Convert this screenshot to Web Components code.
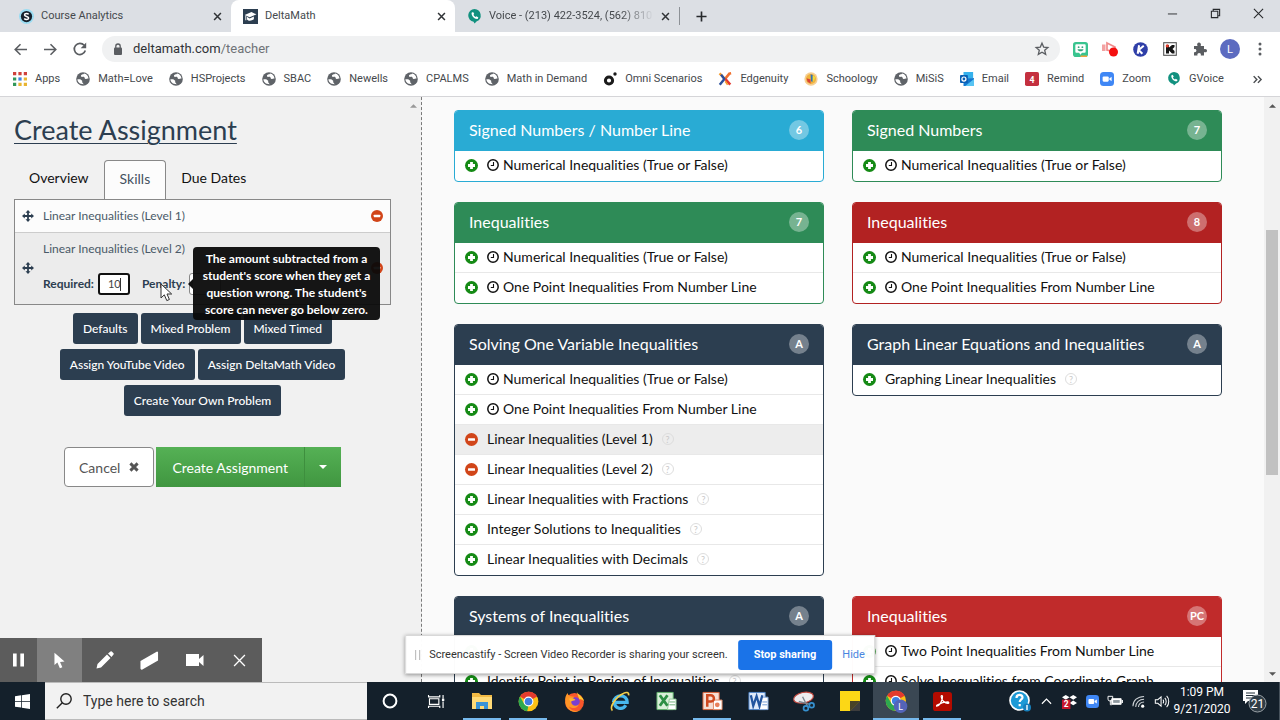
<!DOCTYPE html>
<html lang="en">
<head>
<meta charset="utf-8">
<meta name="viewport" content="width=device-width, initial-scale=1">
<title>DeltaMath</title>
<style>
  html, body { margin: 0; height: 100%; }
  body { overflow: hidden; font-family: Roboto, "Noto Sans", sans-serif; font-size: 11px; color: #3c4043; font-variant-ligatures: none; }
</style>
</head>
<body>
<desktop-screen>
  <tab-strip slot="chrome">
    <browser-tab icon="schoology-s" label="Course Analytics"></browser-tab>
    <browser-tab icon="deltamath" label="DeltaMath" selected></browser-tab>
    <browser-tab icon="voice" label="Voice - (213) 422-3524, (562) 810" fade></browser-tab>
  </tab-strip>
  <address-bar slot="chrome"></address-bar>
  <bookmarks-bar slot="chrome">
    <book-mark icon="apps">Apps</book-mark>
    <book-mark icon="globe">Math=Love</book-mark>
    <book-mark icon="globe">HSProjects</book-mark>
    <book-mark icon="globe">SBAC</book-mark>
    <book-mark icon="globe">Newells</book-mark>
    <book-mark icon="globe">CPALMS</book-mark>
    <book-mark icon="globe">Math in Demand</book-mark>
    <book-mark icon="omni">Omni Scenarios</book-mark>
    <book-mark icon="edgenuity">Edgenuity</book-mark>
    <book-mark icon="schoology">Schoology</book-mark>
    <book-mark icon="globe">MiSiS</book-mark>
    <book-mark icon="outlook">Email</book-mark>
    <book-mark icon="remind">Remind</book-mark>
    <book-mark icon="zoom">Zoom</book-mark>
    <book-mark icon="voice">GVoice</book-mark>
  </bookmarks-bar>

  <assignment-panel slot="page">
    <assigned-skills></assigned-skills>
  </assignment-panel>
  <skill-board slot="page">
    <skill-card heading="Signed Numbers / Number Line" badge="6" tone="#29abd4">
      <skill-row timed>Numerical Inequalities (True or False)</skill-row>
    </skill-card>
    <skill-card heading="Signed Numbers" badge="7" tone="#2e8b57">
      <skill-row timed>Numerical Inequalities (True or False)</skill-row>
    </skill-card>
    <skill-card heading="Inequalities" badge="7" tone="#2e8b57">
      <skill-row timed>Numerical Inequalities (True or False)</skill-row>
      <skill-row timed>One Point Inequalities From Number Line</skill-row>
    </skill-card>
    <skill-card heading="Inequalities" badge="8" tone="#b22222">
      <skill-row timed>Numerical Inequalities (True or False)</skill-row>
      <skill-row timed>One Point Inequalities From Number Line</skill-row>
    </skill-card>
    <skill-card heading="Solving One Variable Inequalities" badge="A" tone="#2c3e50">
      <skill-row timed>Numerical Inequalities (True or False)</skill-row>
      <skill-row timed>One Point Inequalities From Number Line</skill-row>
      <skill-row chosen hovered help>Linear Inequalities (Level 1)</skill-row>
      <skill-row chosen help>Linear Inequalities (Level 2)</skill-row>
      <skill-row help>Linear Inequalities with Fractions</skill-row>
      <skill-row help>Integer Solutions to Inequalities</skill-row>
      <skill-row help>Linear Inequalities with Decimals</skill-row>
    </skill-card>
    <skill-card heading="Graph Linear Equations and Inequalities" badge="A" tone="#2c3e50">
      <skill-row help>Graphing Linear Inequalities</skill-row>
    </skill-card>
    <skill-card heading="Systems of Inequalities" badge="A" tone="#2c3e50">
      <skill-row></skill-row>
      <skill-row help>Identify Point in Region of Inequalities</skill-row>
    </skill-card>
    <skill-card heading="Inequalities" badge="PC" tone="#c02b2b">
      <skill-row timed>Two Point Inequalities From Number Line</skill-row>
      <skill-row timed>Solve Inequalities from Coordinate Graph</skill-row>
    </skill-card>
  </skill-board>

  <recorder-tools slot="overlay"></recorder-tools>
  <share-notice slot="overlay"></share-notice>
  <task-bar slot="taskbar"></task-bar>
</desktop-screen>

<script>
const voiceSvg = '<path d="M8 0a7.3 7.3 0 0 0-1 14.5L8 16.5l2.600-2.500A7.300 7.300 0 0 0 8 0z" fill="#12917f"/><path d="M4.700 4.300l1.700-.9 1.300 2.200-1 1c.5 1.200 1.300 2 2.500 2.600l1-1 2.200 1.400-.9 1.700c-3.500.5-7.200-3.400-6.800-7z" fill="#fff"/>';
const zoomSvg = '<rect width="16" height="16" rx="4" fill="#3f87f5"/><rect x="3" y="5" width="7" height="6" rx="1.300" fill="#fff"/><path d="M10.600 7.400L13.300 5.400v5.200l-2.700-2z" fill="#fff"/>';
const chromeSvg = '<circle cx="16" cy="16" r="15" fill="#fbc116"/><path d="M16 16L3 8.500A15 15 0 0 1 29 8.500z" fill="#e33b2e"/><path d="M16 1a15 15 0 0 1 13 7.500H16z" fill="#e33b2e"/><path d="M3 8.500l6.500 11.300L16 22.500l-2 8.400A15 15 0 0 1 3 8.500z" fill="#2da94f"/><circle cx="16" cy="16" r="7.500" fill="#fff"/><circle cx="16" cy="16" r="5.800" fill="#3e7de0"/>';
/* name: [viewBox, markup]; strokes and fills use currentColor where the icon is monochrome */
const ICONS = {
  'close': ['0 0 10 10', '<path d="M1.200 1.200l7.600 7.600M8.800 1.200L1.200 8.800" stroke="currentColor" stroke-width="1.700"/>'],
  'close-thin': ['0 0 12 12', '<path d="M1 1l10 10M11 1L1 11" stroke="currentColor" stroke-width="1.200"/>'],
  'plus': ['0 0 12 12', '<path d="M6 .5v11M.5 6h11" stroke="currentColor" stroke-width="1.800"/>'],
  'minimize': ['0 0 12 12', '<path d="M1 6.500h10" stroke="currentColor"/>'],
  'restore': ['0 0 12 12', '<path d="M1.500 3.500h7v7h-7zM3.500 3.500v-2h7v7h-2" fill="none" stroke="currentColor" stroke-width="1.200"/>'],
  'schoology-s': ['0 0 16 16', '<circle cx="8" cy="8" r="8" fill="#9adcf2"/><circle cx="8" cy="8" r="6" fill="#15202b"/><path d="M10.300 5.800C9.500 4.600 5.900 4.300 5.900 6.300c0 2 4.400 1.200 4.400 3.300 0 2-3.600 2-4.700.6" fill="none" stroke="#fff" stroke-width="1.600"/>'],
  'deltamath': ['0 0 16 16', '<rect width="16" height="16" fill="#2c3e50"/><path d="M1.800 6.300L9 3.200l5.300 2.500-7.200 3.200z" fill="#fff"/><path d="M4.300 8.300v2.900c1.400 1.900 5 1.700 7.300-.2V7.900L7.100 10z" fill="#fff"/><path d="M3 7v5" stroke="#fff"/>'],
  'voice': ['0 0 16 17', voiceSvg],
  'back': ['0 0 14 14', '<path d="M14 7H1.800M7 1.300L1.300 7 7 12.700" fill="none" stroke="currentColor" stroke-width="1.700"/>'],
  'forward': ['0 0 14 14', '<path d="M0 7h12.200M7 1.300L12.700 7 7 12.700" fill="none" stroke="currentColor" stroke-width="1.700"/>'],
  'reload': ['0 0 14 14', '<path d="M12.300 8.500A5.600 5.600 0 1 1 11.200 3.300" fill="none" stroke="currentColor" stroke-width="1.700"/><path d="M13.200.6v5.600H7.700z" fill="currentColor"/>'],
  'lock': ['0 0 10 12', '<rect x="1" y="4.500" width="8" height="7.500" rx="1" fill="currentColor"/><path d="M2.800 5V3.200a2.200 2.200 0 0 1 4.400 0V5" fill="none" stroke="currentColor" stroke-width="1.300"/>'],
  'star': ['0 0 14 14', '<path d="M7 1.200l1.700 3.900 4.200.4-3.200 2.800 1 4.100L7 10.300l-3.700 2.100 1-4.100L1.100 5.500l4.200-.4z" fill="none" stroke="currentColor" stroke-width="1.300"/>'],
  'bitmoji': ['0 0 16 16', '<rect width="16" height="16" rx="3" fill="#39c48f"/><path d="M3.500 2.500h9a1 1 0 0 1 1 1v7a1 1 0 0 1-1 1h-3L8 13.500 6.500 11.500h-3a1 1 0 0 1-1-1v-7a1 1 0 0 1 1-1z" fill="#fff"/><circle cx="6" cy="5.500" r="1" fill="#39a47f"/><circle cx="10" cy="5.500" r="1" fill="#39a47f"/><path d="M4.800 7.600h6.400c-.4 3-6 3-6.400 0z" fill="#39a47f"/><path d="M8 15.200h7" stroke="#f3a33c" stroke-width="1.600"/>'],
  'castify': ['0 0 16 16', '<rect x="0" y="3.500" width="3.500" height="6.500" fill="#f3a2a2"/><path d="M5 2l8 4v5L5 9z" fill="#fff" stroke="#f08c8c" stroke-width="1.700"/><circle cx="11.500" cy="11" r="4.500" fill="#f40f0f"/>'],
  'kami': ['0 0 16 16', '<circle cx="8" cy="8" r="7.800" fill="#2f3fa8"/><path d="M6.500 3.500L5 12.500M11.500 4L6 8.500l4 4" fill="none" stroke="#fff" stroke-width="2.200"/>'],
  'ksite': ['0 0 14 14', '<rect x=".7" y=".7" width="12.600" height="12.600" fill="#fff" stroke="#555" stroke-width="1.100"/><path d="M3 3h3v2.500L9 3h2.500v2L9.500 7l2 2v2.500H9L6 8.500v3H3z" fill="#151515"/><circle cx="4.300" cy="3.900" r="1.600" fill="#e23b2a"/>'],
  'puzzle': ['0 0 14 14', '<path d="M1 4h3.500C3.500 1.800 4.700.6 6 .6S8.500 1.800 7.700 4H11v3.200c2-.7 3 .4 3 1.500s-1 2.100-3 1.400V13.500H7.800c.5-1.700-.5-2.500-1.700-2.500s-2.100 1-1.600 2.500H1v-3.300c1.500.4 2.400-.5 2.400-1.600S2.500 6.700 1 7.200z" fill="currentColor"/>'],
  'dots': ['0 0 4 14', '<circle cx="2" cy="2" r="1.500" fill="currentColor"/><circle cx="2" cy="7" r="1.500" fill="currentColor"/><circle cx="2" cy="12" r="1.500" fill="currentColor"/>'],
  'apps': ['0 0 13 13', '<path d="M0 0h3v3H0zM5 0h3v3H5zM10 0h3v3h-3z" fill="#d0413b"/><path d="M0 5h3v3H0zM0 10h3v3H0z" fill="#32975a"/><path d="M5 5h3v3H5z" fill="#3f83e0"/><path d="M10 5h3v3h-3zM5 10h3v3H5zM10 10h3v3h-3z" fill="#e9b531"/>'],
  'globe': ['0 0 14 14', '<circle cx="7" cy="7" r="6.800" fill="#5f6368"/><path d="M1.400 7.300h2.800l2 1.500v1.400l1.500 2C4 12.300 1.500 10.300 1.400 7.300zM8 1.600c-.5 1.400-3.300.7-3 2.600.4 1.600 2.500 0 3.300 1 .7.900.2 1.500 1.400 1.900 1.100.2 1.800-.9 2.800-.3C12.400 4 10.600 1.900 8 1.600z" fill="#fff"/>'],
  'omni': ['0 0 14 14', '<circle cx="6" cy="8.500" r="3.600" fill="none" stroke="#1b1b1b" stroke-width="3"/><circle cx="12" cy="2" r="1.700" fill="#1b1b1b"/>'],
  'edgenuity': ['0 0 16 16', '<path d="M8 8L13 1.800M8 8L13 1.800l2-.4" stroke="#f1702e" stroke-width="3" fill="none"/><path d="M1.800 1.500L8 8" stroke="#f49a2b" stroke-width="2.800"/><path d="M3.500 3L7.300 8 2 14.500" fill="none" stroke="#2a4f9c" stroke-width="2.800"/><path d="M8.500 8L14 14.500" stroke="#e3372e" stroke-width="3"/><path d="M8.300 10.500L11 14.500" stroke="#f49a2b" stroke-width="1.800"/>'],
  'schoology': ['0 0 16 16', '<circle cx="8" cy="8" r="7.600" fill="#f6cf92"/><circle cx="8" cy="8" r="5.800" fill="#f1b33e"/><path d="M7.500 2.500l2.500 1v8l-2-1z" fill="#2f72b8"/><path d="M3 7l4.500 1.500V13L4 11z" fill="#d94436"/><path d="M10 4l3 2-3 6z" fill="#edde3a"/>'],
  'outlook': ['0 0 16 16', '<path d="M4 0h11v7H4z" fill="#35b1ec"/><path d="M4 7h12v9H4z" fill="#1177cf"/><path d="M16 8v8H6z" fill="#58c4f3"/><rect x="0" y="3.500" width="9" height="9" rx="1" fill="#0a5fb4"/><circle cx="4.500" cy="8" r="2.300" fill="none" stroke="#fff" stroke-width="1.400"/>'],
  'remind': ['0 0 16 16', '<rect width="16" height="16" rx="2" fill="#c4303f"/><text x="8" y="12" font-size="10" font-weight="700" text-anchor="middle" fill="#fff">4</text>'],
  'zoom': ['0 0 16 16', zoomSvg],
  'chevrons': ['0 0 8 8', '<path d="M.6 1L3.400 4 .6 7M4.400 1L7.200 4 4.400 7" fill="none" stroke="currentColor" stroke-width="1.300"/>'],
  'move': ['0 0 12 12', '<path d="M6 0l2.500 2.800H6.900v2.300h2.300V3.500L12 6 9.200 8.500V6.900H6.900v2.300h1.600L6 12 3.500 9.200h1.600V6.900H2.800v1.600L0 6l2.800-2.500v1.600h2.300V2.800H3.500z" fill="currentColor"/>'],
  'minus-circle': ['0 0 13 13', '<circle cx="6.500" cy="6.500" r="6.500" fill="#d14519"/><rect x="3" y="5.200" width="7" height="2.600" rx=".5" fill="#fff"/>'],
  'plus-circle': ['0 0 13 13', '<circle cx="6.500" cy="6.500" r="6.500" fill="#158a15"/><path d="M5.100 3h2.800v2.100H10v2.800H7.900V10H5.100V7.900H3V5.100h2.100z" fill="#fff"/>'],
  'clock': ['0 0 12 12', '<circle cx="6" cy="6" r="5.200" fill="none" stroke="currentColor" stroke-width="1.500"/><path d="M6.500 3v3.500H3.800" fill="none" stroke="currentColor" stroke-width="1.100"/>'],
  'cross-bold': ['0 0 10 10', '<path d="M1.400 1.400l7.200 7.200M8.600 1.400L1.400 8.600" stroke="currentColor" stroke-width="2.900"/>'],
  'caret': ['0 0 8 4', '<path d="M0 0h8L4 4z" fill="currentColor"/>'],
  'caret-up': ['0 0 8 4', '<path d="M0 4h8L4 0z" fill="currentColor"/>'],
  'pause': ['0 0 12 14', '<path d="M0 0h4v14H0zM8 0h4v14H8z" fill="#fff"/>'],
  'pointer': ['0 0 12 18', '<path d="M.5.500v13.500l3.200-2.800L6.400 17.500l2.700-1.100-2.500-5.900 4.900-.3z" fill="#fff"/>'],
  'mouse': ['0 0 13 19', '<path d="M1 1v14l3.300-3.200 2.500 5.800 2.600-1.100L7 11h4.700z" fill="#fff" stroke="#333" stroke-width="1"/>'],
  'pencil': ['0 0 18 18', '<path d="M.5 17.500l1-4.500L11 3.500l3.500 3.500L5 16.500zM12 2.500L14.500.4a1 1 0 0 1 1.300.1l1.700 1.700a1 1 0 0 1 0 1.400L15.500 6z" fill="#fff"/>'],
  'eraser': ['0 0 20 20', '<path d="M.5 10.500L17.500.8a1 1 0 0 1 1.500.9V10L2.500 19.500a1.300 1.300 0 0 1-2-1z" fill="#fff"/>'],
  'camera': ['0 0 18 14', '<rect y="1" width="13" height="12" fill="#fff"/><path d="M13 6l4.500-4v11L13 9z" fill="#fff"/>'],
  'windows': ['0 0 16 16', '<path d="M0 2.300L6.500 1.400v6.100H0zM7.300 1.300L16 0v7.500H7.300zM0 8.300h6.500v6.200L0 13.600zM7.300 8.300H16V16l-8.700-1.300z" fill="#fff"/>'],
  'search': ['0 0 16 16', '<circle cx="10" cy="6" r="5.200" fill="none" stroke="currentColor" stroke-width="1.400"/><path d="M6.300 9.700L.8 15.300" stroke="currentColor" stroke-width="1.400"/>'],
  'cortana': ['0 0 16 16', '<circle cx="8" cy="8" r="6.400" fill="none" stroke="#fff" stroke-width="2"/>'],
  'taskview': ['0 0 18 16', '<path d="M1.500 5h10v6h-10zM.5 1v2h12V1M.5 15v-2h12v2M16 1v4M16 8v7" fill="none" stroke="#fff" stroke-width="1.200"/><rect x="14.800" y="5" width="2.500" height="2.500" fill="#fff"/>'],
  'explorer': ['0 0 20 18', '<path d="M0 1h7l2 2h11v14H0z" fill="#f2ba45"/><path d="M0 5h20v12H0z" fill="#ffda77"/><path d="M4 17V10h12v7h-4v-3H8v3z" fill="#3a93d6"/>'],
  'chrome': ['0 0 32 32', chromeSvg],
  'firefox': ['0 0 22 22', '<circle cx="11" cy="12" r="9.800" fill="#f9562b"/><path d="M13 0c1 4 7 5 8 11-2-2-3-3-5-2z" fill="#ffca2e"/><path d="M1.300 10C.8 6 3 3 4 2c0 2 1 2.500 3 3.500L11 6C8 9 10 15 15 12c2 5-6 8-10 4 2 5 9 7 14 2-6 8-18 3-17.700-8z" fill="#ff9526"/><circle cx="12" cy="11" r="4.500" fill="#7a3fd0"/><path d="M5 8c3-1 6-.5 7 1.500-2 1-4 .5-5 2z" fill="#ffb52c"/>'],
  'ie': ['0 0 22 22', '<path d="M16.500 15a6.300 6.300 0 0 1-11.800-3.200H18c.3-9-13.500-9-14.400 0" fill="none" stroke="#48b8ee" stroke-width="3.400"/><path d="M2.500 20.500C-1 17 6 6 14 2.500c3-1.500 6-1.500 5.500 2" fill="none" stroke="#f5cf4a" stroke-width="1.700"/>'],
  'excel': ['0 0 22 20', '<path d="M1 1h17v18H1z" fill="#d9efd9" stroke="#62b36d"/><path d="M14 8h7v11h-9z" fill="#fff" stroke="#90c695"/><path d="M4 4l8 11M12 4L4 15" stroke="#2d8f45" stroke-width="3"/><path d="M14 11h6M14 14h6" stroke="#6aae73"/>'],
  'ppt': ['0 0 22 20', '<path d="M1 1h17v18H1z" fill="#f6dfd5" stroke="#d9633b"/><path d="M12 9h9v10h-9z" fill="#fff" stroke="#e28a66"/><path d="M5.500 16V4h3.700a3 3 0 0 1 0 6.600H6" fill="none" stroke="#cf4920" stroke-width="2.600"/><circle cx="16" cy="14" r="2.500" fill="#e8805b"/>'],
  'word': ['0 0 22 20', '<path d="M1 1h17v18H1z" fill="#dfeafa" stroke="#4f86cc"/><path d="M14 6h7v13h-9z" fill="#fff" stroke="#81a7da"/><path d="M3 4l2.500 11L9 5l3 10L15 4" fill="none" stroke="#22559f" stroke-width="2.400"/><path d="M15 11h5M15 14h5" stroke="#6a96d2"/>'],
  'snip': ['0 0 24 22', '<ellipse cx="11" cy="7" rx="10.500" ry="5.500" fill="#ededf0" stroke="#c44b42" stroke-width="1.200" transform="rotate(-12 11 7)"/><path d="M6 11l12 3M10 6l5 10" stroke="#7d8790" stroke-width="1.400"/><circle cx="13.500" cy="18" r="2.500" fill="none" stroke="#3590cf" stroke-width="1.800"/><circle cx="19.500" cy="15" r="2.500" fill="none" stroke="#3590cf" stroke-width="1.800"/>'],
  'sticky': ['0 0 20 20', '<path d="M0 0h20v10L10 20H0z" fill="#fcd716"/><path d="M20 10v10H10z" fill="#3d3d3d"/><path d="M10 20V10h10z" fill="#494327"/>'],
  'chrome-user': ['0 0 34 34', chromeSvg + '<circle cx="23" cy="24" r="10" fill="#5464b8"/><text x="23" y="29" font-size="13" text-anchor="middle" fill="#fff">L</text>'],
  'acrobat': ['0 0 20 20', '<rect width="20" height="20" rx="3" fill="#b30b00"/><path d="M4 15c2 0 6.500-5.500 6-10.500-.2-1.200-1.500-1-1.400.4C9 9 13 12.500 16 12c1-.3.8-1.400-.6-1.500-3 0-8 1.600-11 3.300-1 .6-.6 1.200-.4 1.200z" fill="none" stroke="#fff" stroke-width="1.300"/>'],
  'help-tray': ['0 0 22 22', '<circle cx="10.500" cy="10.500" r="9.500" fill="#1d9ad6" stroke="#fff" stroke-width="1.700"/><path d="M7.500 8c0-4 6-4 6-.6 0 2-2.800 2.100-2.800 4.600M10.700 14v2.300" fill="none" stroke="#fff" stroke-width="2.200"/><circle cx="18" cy="17.500" r="4" fill="#1780bd"/><path d="M18 15v5" stroke="#fff" stroke-width="1.400"/>'],
  'up': ['0 0 12 8', '<path d="M1 7l5-5 5 5" fill="none" stroke="#fff" stroke-width="1.300"/>'],
  'dropbox': ['0 0 16 16', '<path d="M4 1l4 2.500L4 6 0 3.500zM12 1l4 2.500L12 6 8 3.500zM12 7l4 2.500-4 2.500-4-2.500z" fill="#fff"/><rect y="6" width="9" height="10" fill="#c5142c"/><text x="4.500" y="14" font-size="9" font-weight="700" text-anchor="middle" fill="#fff">2</text>'],
  'battery': ['0 0 16 12', '<path d="M4 3.500h10v6H4z" fill="#fff" stroke="#fff"/><path d="M5.500 5h7v3h-7z" fill="#8e989e"/><path d="M15.200 5v3" stroke="#fff" stroke-width="1.400"/><path d="M0 1h5v3a2 2 0 0 1-2 2H2a2 2 0 0 1-2-2zM2.500 5v5H4" fill="none" stroke="#fff"/>'],
  'wifi': ['0 0 14 14', '<path d="M1 12C1 6 6 1.500 13 1.500M4 13c0-5 4-8.500 9-8.500M7 13c0-3 2.500-5.500 6-5.500" fill="none" stroke="#cfd4d8" stroke-width="1.100"/><circle cx="11.500" cy="12" r="1.700" fill="#fff"/>'],
  'volume': ['0 0 16 14', '<path d="M.8 5h2.700L7 2v10L3.500 9H.8z" fill="none" stroke="#fff" stroke-width="1.100"/><path d="M9 5c1 1 1 3 0 4M11 3c2 2 2 6 0 8M13 1c3 3 3 9 0 12" fill="none" stroke="#fff" stroke-width="1.100"/>'],
  'notes': ['0 0 26 26', '<path d="M1 2h15v11H6l-3 3v-3H1z" fill="#fff"/><path d="M4 5h9M4 7.500h9M4 10h6" stroke="#22303b"/><circle cx="15.500" cy="15.500" r="8.500" fill="#303d47" stroke="#9aa1a6"/><text x="15.500" y="20" font-size="12" text-anchor="middle" fill="#fff">21</text>']
};

class Component extends HTMLElement {
  connectedCallback() {
    if (this.shadowRoot) return;
    const t = document.createElement('template');
    t.innerHTML = `<style>
      *, *::before, *::after { box-sizing: border-box; }
      :host { display: block; box-sizing: border-box; }
      button, input { font: inherit; color: inherit; margin: 0; }
      button { display: flex; align-items: center; justify-content: center; padding: 0; border: 0; background: none; }
      a { color: inherit; text-decoration: none; }
      ${this.css()}</style>${this.html()}`;
    this.attachShadow({ mode: 'open' }).append(t.content.cloneNode(true));
  }
  css() { return ''; }
  html() { return '<slot></slot>'; }
}
const icon = (name, w, h = w) => `<ui-icon name="${name}" w="${w}" h="${h}"></ui-icon>`;
const iconButton = (label, name, w, h = w, cls = '') => `<button class="${cls}" aria-label="${label}">${icon(name, w, h)}</button>`;

class UiIcon extends Component {
  css() { return `:host { display: block; flex: none; width: ${this.getAttribute('w')}px; height: ${this.getAttribute('h')}px; } svg { display: block; width: 100%; height: 100%; overflow: visible; }`; }
  html() {
    const [box, art] = ICONS[this.getAttribute('name')];
    return `<svg viewBox="${box}" aria-hidden="true">${art}</svg>`;
  }
}

class DesktopScreen extends Component {
  css() { return `
    :host { display: flex; flex-direction: column; height: 100vh; position: relative; }
    main { flex: 1; min-height: 0; display: flex; overflow: hidden; border-top: 1px solid #d5d5d8; background: #f1f1f1; }
    .overlay { position: absolute; left: 0; right: 0; bottom: 38px; z-index: 2; }`; }
  html() { return `<slot name="chrome"></slot><main><slot name="page"></slot></main><div class="overlay"><slot name="overlay"></slot></div><slot name="taskbar"></slot>`; }
}

class TabStrip extends Component {
  css() { return `
    :host { flex: none; display: flex; align-items: stretch; height: 32px; padding-left: 7px; background: #dcdfe4; color: #27292c; }
    .new { width: 43px; border-left: 1px solid #8d9196; height: 18px; align-self: center; }
    .controls { margin-left: auto; display: flex; height: 27px; }
    .controls button { width: 43px; }`; }
  html() { return `<slot></slot>${iconButton('New tab', 'plus', 11, 11, 'new')}
    <div class="controls">${iconButton('Minimize', 'minimize', 11)}${iconButton('Restore', 'restore', 11)}${iconButton('Close', 'close-thin', 11)}</div>`; }
}

class BrowserTab extends Component {
  css() { return `
    :host { display: flex; align-items: center; gap: 7px; width: 224px; padding: 0 9px 0 12px; color: #45494d; }
    :host([selected]) { background: #fff; border-radius: 8px 8px 0 0; }
    span { flex: 1; min-width: 0; overflow: hidden; white-space: nowrap; line-height: 16px; }
    :host([fade]) span { -webkit-mask-image: linear-gradient(90deg, #000 80%, transparent); mask-image: linear-gradient(90deg, #000 80%, transparent); }
    button { color: #303336; }`; }
  html() { return `${icon(this.getAttribute('icon'), 15)}<span>${this.getAttribute('label')}</span>${iconButton('Close tab', 'close', 9)}`; }
}

class AddressBar extends Component {
  css() { return `
    :host { flex: none; display: flex; align-items: center; height: 34px; padding: 0 5px; background: #fff; color: #5a5d61; }
    button { width: 30px; height: 30px; flex: none; }
    .field { flex: 1; display: flex; align-items: center; gap: 10px; height: 26px; margin: 0 5px 0 7px; padding-left: 11px; border-radius: 13px; background: #f0f1f2; }
    .url { flex: 1; font-size: 13px; line-height: 18px; color: #6f7377; }
    b { font-weight: 400; color: #303337; }
    .field button { width: 36px; }
    .avatar { width: 20px; height: 20px; margin: 0 5px; border-radius: 50%; background: #5c6bc0; color: #fff; }`; }
  html() { return `${iconButton('Back', 'back', 13)}${iconButton('Forward', 'forward', 13)}${iconButton('Reload', 'reload', 14)}
    <div class="field">${icon('lock', 10, 12)}<a class="url" href="#"><b>deltamath.com</b>/teacher</a>${iconButton('Bookmark this page', 'star', 14)}</div>
    ${iconButton('Bitmoji', 'bitmoji', 15)}${iconButton('Screencastify', 'castify', 16)}${iconButton('Kami', 'kami', 15)}${iconButton('Extension', 'ksite', 14)}${iconButton('Extensions', 'puzzle', 14)}
    <button class="avatar" aria-label="Profile">L</button>${iconButton('Menu', 'dots', 4, 14)}`; }
}

class BookmarksBar extends Component {
  css() { return `
    :host { flex: none; display: flex; align-items: center; justify-content: space-between; height: 30px; padding: 0 16px 4px 13px; background: #fff; }
    button { width: 12px; margin-left: 12px; color: #4a4d50; }`; }
  html() { return `<slot></slot>${iconButton('More bookmarks', 'chevrons', 9)}`; }
}
class BookMark extends Component {
  css() { return `:host { display: block; } a { display: flex; align-items: center; gap: 8px; line-height: 16px; white-space: nowrap; color: #45484c; }`; }
  html() { return `<a href="#">${icon(this.getAttribute('icon'), 14)}<span><slot></slot></span></a>`; }
}

class AssignmentPanel extends Component {
  css() { return `
    :host { flex: 0 0 422px; position: relative; padding: 16px 30px 0 14px; border-right: 1px dashed #7a7a7a; font-family: Lato, sans-serif; color: #2c3e50; }
    h1 { margin: 0; font-size: 27px; line-height: 34px; font-weight: 400; text-decoration: underline; text-decoration-thickness: 1px; text-underline-offset: 3px; }
    nav { display: flex; margin-top: 12px; font-size: 14px; line-height: 36px; color: #111; }
    nav a { padding: 0 14px 2px; border: 1px solid transparent; }
    nav .on { position: relative; top: 1px; padding: 0 15px 2px; background: #fcfcfc; border: 1px solid #888; border-bottom: 0; border-radius: 4px 4px 0 0; color: #45525f; }
    .tools { display: flex; flex-wrap: wrap; justify-content: center; gap: 5px 3px; margin: 8px 30px 0; }
    .tools button { height: 31px; padding: 0 10px 1px; border-radius: 3px; background: #2c3e50; color: #fff; font-size: 12px; font-weight: 500; }
    .actions { display: flex; justify-content: center; gap: 2px; margin-top: 31px; font-size: 14px; }
    .actions button { height: 40px; padding: 0 16px; }
    .actions .cancel { gap: 9px; padding: 0 14px; background: #fff; border: 1px solid #888; border-radius: 4px; color: #555; }
    .split { display: flex; color: #fff; }
    .split button { background: linear-gradient(#55b155, #409640); }
    .split .more { padding: 0 14px; border-left: 1px solid #3e8f3e; }
    .scroll { position: absolute; top: 7px; right: 4px; color: #999; }`; }
  html() { return `<h1>Create Assignment</h1>
    <nav><a href="#">Overview</a><a href="#" class="on">Skills</a><a href="#">Due Dates</a></nav>
    <slot></slot>
    <div class="tools"><button>Defaults</button><button>Mixed Problem</button><button>Mixed Timed</button><button>Assign YouTube Video</button><button>Assign DeltaMath Video</button><button>Create Your Own Problem</button></div>
    <div class="actions"><button class="cancel">Cancel ${icon('cross-bold', 10)}</button>
      <div class="split"><button>Create Assignment</button><button class="more" aria-label="More actions">${icon('caret', 8, 4)}</button></div></div>
    <div class="scroll">${icon('caret-up', 7, 4)}</div>`; }
}

class AssignedSkills extends Component {
  css() { return `
    :host { position: relative; border: 1px solid #888; font-size: 12px; }
    .row { display: flex; align-items: center; padding: 0 7px 1px; background: #fcfcfc; }
    .row + .row { border-top: 1px solid #ccc; background: #ececec; }
    .info { flex: 1; margin-left: 9px; }
    .name { line-height: 31px; color: #4a5a68; }
    .fields { display: flex; align-items: center; height: 39px; font-weight: 700; }
    input { height: 22px; background: #fff; border: 1px solid #888; border-radius: 3px; padding: 0 8px; font-weight: 400; font-size: 11px; color: #444; }
    .need { width: 32px; margin: 0 12px 0 4px; border: 2px solid #111; background: linear-gradient(#333, #333) 20px 3px / 1px 13px no-repeat #fff; }
    .cost { width: 32px; margin-left: 4px; }
    .tip { position: absolute; left: 178px; top: 47px; width: 187px; padding: 3px 8px 2px; border-radius: 4px; background: rgba(10, 10, 10, .95); color: #fff; font-weight: 700; line-height: 17px; text-align: center; }
    .tip::before { content: ""; position: absolute; left: -5px; top: 32px; border: 5px solid transparent; border-left: 0; border-right-color: #111; }
    .mouse { position: absolute; left: 145px; top: 83px; }`; }
  html() { return `
    <div class="row">${icon('move', 12)}<div class="info"><div class="name">Linear Inequalities (Level 1)</div></div>${iconButton('Remove Level 1', 'minus-circle', 12)}</div>
    <div class="row">${icon('move', 12)}<div class="info"><div class="name">Linear Inequalities (Level 2)</div>
      <div class="fields"><label for="need">Required:</label><input id="need" class="need" value="10"><label for="cost">Penalty:</label><input id="cost" class="cost"></div></div>${iconButton('Remove Level 2', 'minus-circle', 12)}</div>
    <div class="tip" role="tooltip">The amount subtracted from a student's score when they get a question wrong. The student's score can never go below zero.</div>
    <div class="mouse">${icon('mouse', 13, 19)}</div>`; }
}

class SkillBoard extends Component {
  css() { return `
    :host { flex: 1; min-width: 0; display: flex; background: #fafafa; font-family: Lato, sans-serif; color: #111; }
    .grid { flex: 1; min-width: 0; display: grid; grid-template-columns: repeat(2, minmax(0, 1fr)); grid-auto-rows: max-content; align-items: start; align-content: start; gap: 20px 28px; padding: 13px 42px 0 32px; }
    .bar { flex: none; width: 16px; display: flex; flex-direction: column; align-items: center; padding: 7px 0 6px; background: #f1f1f1; color: #555; }
    .thumb { width: 12px; height: 245px; margin: 122px 0 auto; background: #c1c1c1; }`; }
  html() { return `<div class="grid"><slot></slot></div><div class="bar">${icon('caret-up', 7, 4)}<div class="thumb"></div>${icon('caret', 7, 4)}</div>`; }
}

class SkillCard extends Component {
  css() { return `
    :host { border: 1px solid ${this.getAttribute('tone')}; border-radius: 4px; overflow: hidden; background: #fff; }
    header { display: flex; align-items: center; justify-content: space-between; height: 40px; padding: 0 14px 2px; background: ${this.getAttribute('tone')}; color: #fff; }
    h2 { margin: 0; font-size: 16px; line-height: 24px; font-weight: 400; }
    .badge { width: 20px; height: 20px; border-radius: 50%; background: rgba(255, 255, 255, .35); font-size: 11px; line-height: 20px; font-weight: 700; text-align: center; }`; }
  html() { return `<header><h2>${this.getAttribute('heading')}</h2><span class="badge">${this.getAttribute('badge')}</span></header><slot></slot>`; }
}

class SkillRow extends Component {
  css() { return `
    :host { display: flex; align-items: center; height: 30px; padding: 0 10px 2px; font-size: 14px; }
    :host(:not(:last-child)) { padding-bottom: 1px; border-bottom: 1px solid #e8e8e8; }
    :host([hovered]) { background: #ededed; }
    a { display: flex; align-items: center; gap: 4px; margin-left: 9px; line-height: 22px; white-space: nowrap; }
    .help { width: 12px; height: 12px; margin-left: 9px; border: 1px solid #ddd; border-radius: 50%; color: #c9c9c9; font-size: 9px; }`; }
  html() {
    const chosen = this.hasAttribute('chosen');
    return `${iconButton(chosen ? 'Remove skill' : 'Add skill', chosen ? 'minus-circle' : 'plus-circle', 13)}
      <a href="#">${this.hasAttribute('timed') ? icon('clock', 12) : ''}<span><slot></slot></span></a>${this.hasAttribute('help') ? '<button class="help" aria-label="Example">?</button>' : ''}`;
  }
}

class RecorderTools extends Component {
  css() { return `
    :host { position: absolute; left: 0; bottom: 0; display: flex; height: 44px; background: #5c5c5c; color: #fff; }
    button { width: 45px; height: 44px; }
    button:first-of-type { width: 37px; }
    .on { background: #808080; }`; }
  html() { return iconButton('Pause', 'pause', 11, 14) + iconButton('Pointer', 'pointer', 11, 17, 'on') + iconButton('Pen', 'pencil', 18) + iconButton('Eraser', 'eraser', 19) + iconButton('Camera', 'camera', 18, 14) + iconButton('Close', 'close-thin', 13); }
}

class ShareNotice extends Component {
  css() { return `
    :host { position: absolute; left: 50%; bottom: 8px; transform: translateX(-50%); display: flex; align-items: center; height: 39px; padding: 0 9px; background: #fffffffa; border: 1px solid #d8d8d8; box-shadow: 0 1px 4px rgba(0, 0, 0, .4); color: #333; white-space: nowrap; }
    .grip { width: 5px; height: 10px; margin-right: 9px; border: solid #b5b5b5; border-width: 0 1px; }
    button { height: 30px; margin: 0 10px; padding: 0 16px; border-radius: 3px; background: #1a73e8; color: #fff; font-weight: 700; }
    a { color: #4a86e0; }`; }
  html() { return `<span class="grip"></span><span>Screencastify - Screen Video Recorder is sharing your screen.</span><button>Stop sharing</button><a href="#">Hide</a>`; }
}

class TaskBar extends Component {
  css() { return `
    :host { flex: none; display: flex; align-items: stretch; height: 38px; position: relative; z-index: 3; background: #14202b; color: #fff; }
    .start { width: 45px; flex: none; }
    .search { flex: 0 0 322px; display: flex; align-items: center; gap: 11px; padding: 0 11px; background: #f2f2f2; border: 1px solid #bbb; border-width: 1px 0; color: #222; }
    input { flex: 1; min-width: 0; height: 24px; padding: 0; border: 0; background: none; font-size: 14px; }
    input::placeholder { color: #333; opacity: 1; }
    .apps { display: flex; }
    .apps button { width: 38px; margin: 0 4px; border: solid transparent; border-width: 2px 0; }
    .apps button.run { border-bottom-color: #76b9ed; }
    .apps button.on { width: 46px; margin: 0; background: #3a4753; border-top-color: #3a4753; }
    .tray { margin-left: auto; display: flex; align-items: center; }
    .tray button { width: 23px; }
    .tray .wide { width: 30px; }
    .clock { width: 58px; font-size: 12px; text-align: center; line-height: 17px; }
    .tray .notes { width: 48px; }
    .edge { width: 1px; height: 38px; background: #47525c; }`; }
  html() { return `${iconButton('Start', 'windows', 15, 15, 'start')}
    <label class="search">${icon('search', 16)}<input placeholder="Type here to search" aria-label="Search"></label>
    <div class="apps">${iconButton('Cortana', 'cortana', 16)}${iconButton('Task view', 'taskview', 17, 15)}${iconButton('Explorer', 'explorer', 20, 18, 'run')}${iconButton('Chrome', 'chrome', 21, 21, 'run')}${iconButton('Firefox', 'firefox', 21)}${iconButton('Internet Explorer', 'ie', 21)}${iconButton('Excel', 'excel', 21, 20)}${iconButton('PowerPoint', 'ppt', 21, 20, 'run')}${iconButton('Word', 'word', 21, 20)}${iconButton('Snipping tool', 'snip', 23, 21)}${iconButton('Sticky notes', 'sticky', 20)}${iconButton('Chrome profile', 'chrome-user', 23, 23, 'run on')}${iconButton('Acrobat', 'acrobat', 19, 19, 'run')}</div>
    <div class="tray">${iconButton('Help', 'help-tray', 22, 22, 'wide')}${iconButton('Show hidden', 'up', 11, 8)}${iconButton('Dropbox', 'dropbox', 15)}${iconButton('Zoom', 'zoom', 13)}${iconButton('Battery', 'battery', 15, 12)}${iconButton('Network', 'wifi', 13)}${iconButton('Volume', 'volume', 16, 13)}
      <div class="clock">1:09 PM<br>9/21/2020</div>${iconButton('Notifications', 'notes', 26, 26, 'notes')}<span class="edge"></span></div>`; }
}

Object.entries({
  'ui-icon': UiIcon, 'desktop-screen': DesktopScreen, 'tab-strip': TabStrip, 'browser-tab': BrowserTab, 'address-bar': AddressBar,
  'bookmarks-bar': BookmarksBar, 'book-mark': BookMark, 'assignment-panel': AssignmentPanel, 'assigned-skills': AssignedSkills,
  'skill-board': SkillBoard, 'skill-card': SkillCard, 'skill-row': SkillRow, 'recorder-tools': RecorderTools,
  'share-notice': ShareNotice, 'task-bar': TaskBar
}).forEach(([name, cls]) => customElements.define(name, cls));
</script>
</body>
</html>
